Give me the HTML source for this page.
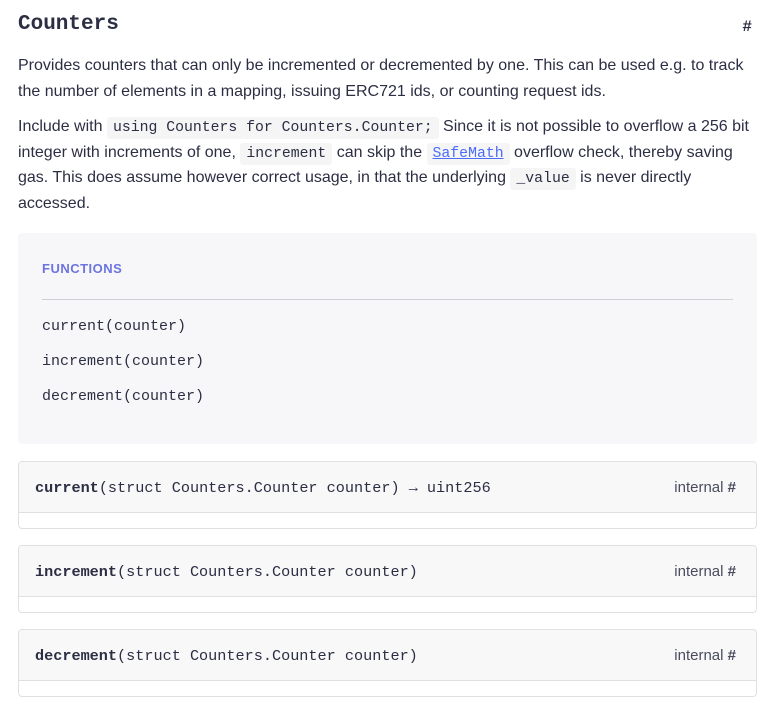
<!DOCTYPE html>
<html><head><meta charset="utf-8"><style>
body{margin:0;background:#fff;color:#2c2e43;font-family:"Liberation Sans",sans-serif;width:761px;height:716px;overflow:hidden;position:relative}
h1{position:absolute;left:18px;top:13px;margin:0;font:bold 21px "Liberation Mono",monospace;color:#2c2e43}
.hash{position:absolute;right:9px;top:18px;font:bold 16px "Liberation Mono",monospace}
p{position:absolute;left:18px;margin:0;font-size:16px;line-height:25.7px;white-space:nowrap}
p span{display:block;height:25.7px}
code{font-family:"Liberation Mono",monospace;font-size:14.8px;line-height:1;background:#f5f5f6;border-radius:3px;padding:3px 6px}
code a{color:#4a6cf7;text-decoration:underline}
.fbox{position:absolute;left:18px;top:233px;width:739px;height:211px;background:#f7f7f9;border-radius:4px}
.ft{position:absolute;left:24px;top:28px;font-weight:bold;font-size:13px;color:#6b74e0;letter-spacing:.5px}
.fl{position:absolute;left:24px;right:24px;top:66px;border-top:1px solid #cfcfd4}
.fi{position:absolute;left:24px;font:15px "Liberation Mono",monospace}
.card{position:absolute;left:18px;width:737px;height:66px;border:1px solid #e0e0e3;border-radius:4px;background:#fff}
.ch{height:50px;background:#f8f8f9;border-bottom:1px solid #e0e0e3;position:relative;border-radius:4px 4px 0 0}
.sig{position:absolute;left:16px;top:17px;font:15.2px "Liberation Mono",monospace;white-space:nowrap}
.int{position:absolute;right:20px;top:17px;font-size:15px;color:#4a4c5e}
</style></head><body>
<h1>Counters</h1><div class="hash">#</div>
<p style="top:53px"><span>Provides counters that can only be incremented or decremented by one. This can be used e.g. to track</span><span>the number of elements in a mapping, issuing ERC721 ids, or counting request ids.</span></p>
<p style="top:114px"><span>Include with <code>using Counters for Counters.Counter;</code> Since it is not possible to overflow a 256 bit</span><span>integer with increments of one, <code>increment</code> can skip the <code><a>SafeMath</a></code> overflow check, thereby saving</span><span>gas. This does assume however correct usage, in that the underlying <code>_value</code> is never directly</span><span>accessed.</span></p>
<div class="fbox"><div class="ft">FUNCTIONS</div><div class="fl"></div>
<div class="fi" style="top:85px">current(counter)</div>
<div class="fi" style="top:120px">increment(counter)</div>
<div class="fi" style="top:155px">decrement(counter)</div></div>
<div class="card" style="top:461px"><div class="ch"><div class="sig"><b>current</b>(struct Counters.Counter counter) → uint256</div><div class="int">internal <b>#</b></div></div></div>
<div class="card" style="top:545px"><div class="ch"><div class="sig"><b>increment</b>(struct Counters.Counter counter)</div><div class="int">internal <b>#</b></div></div></div>
<div class="card" style="top:629px"><div class="ch"><div class="sig"><b>decrement</b>(struct Counters.Counter counter)</div><div class="int">internal <b>#</b></div></div></div>
</body></html>
